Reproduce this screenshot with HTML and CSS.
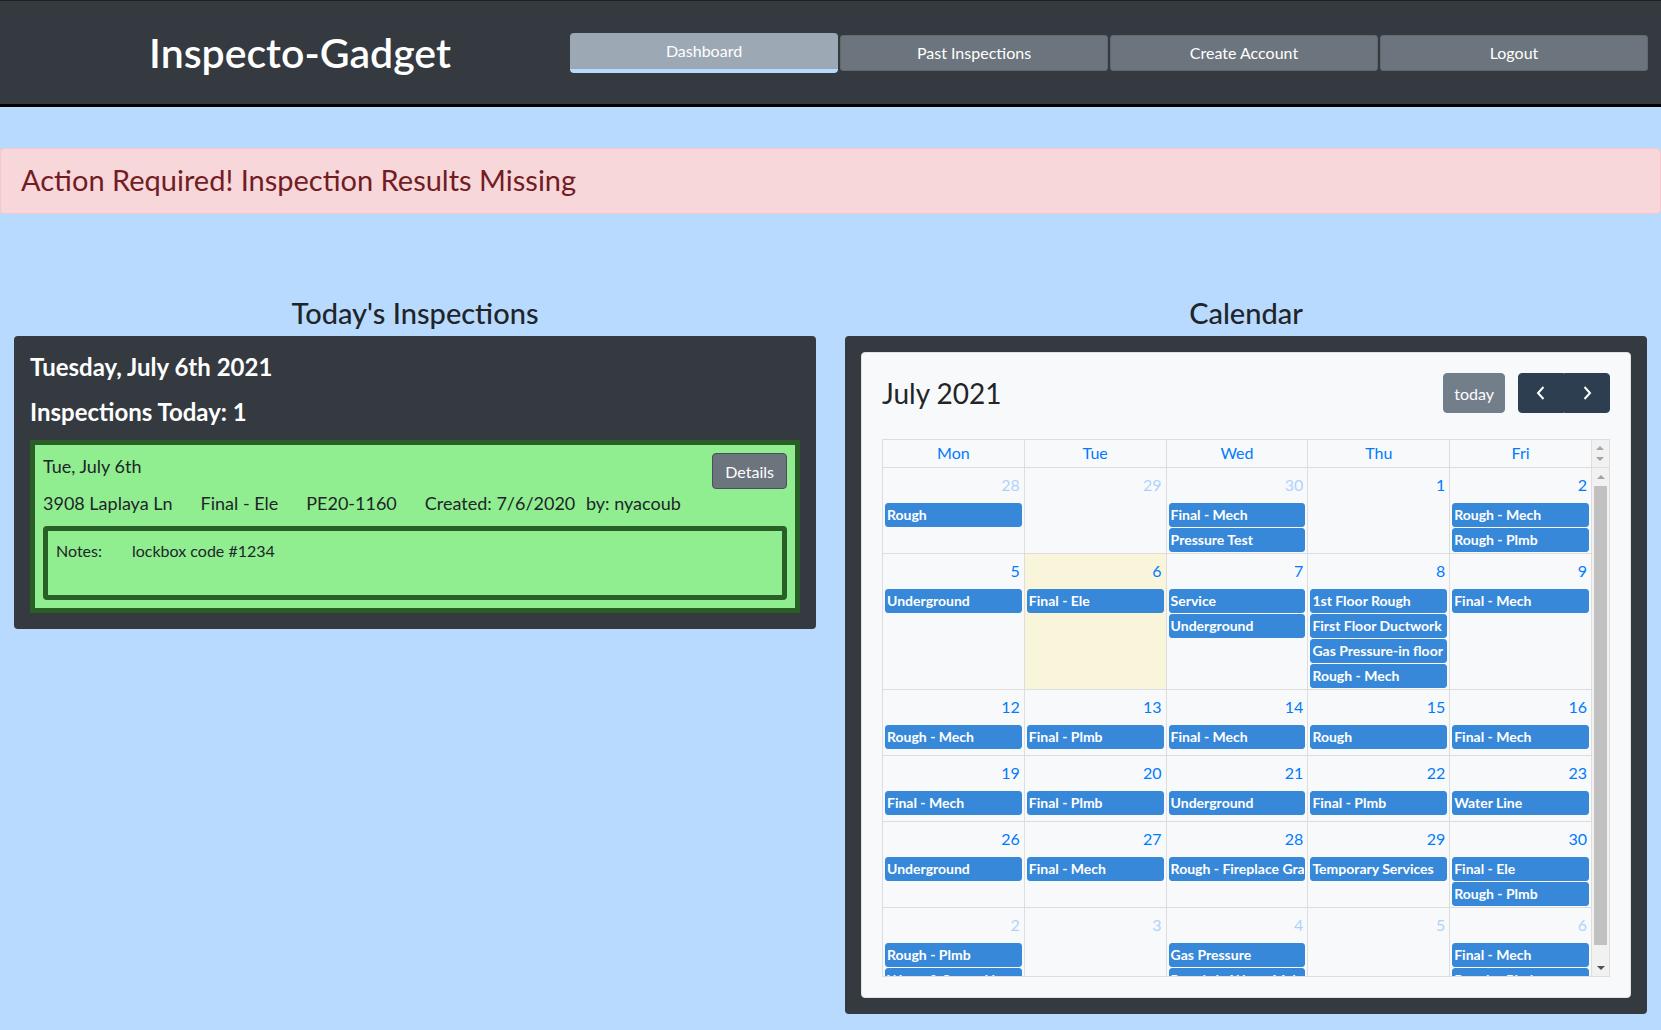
FILE: index.html
```html
<!DOCTYPE html>
<html lang="en">
<head>
    <meta charset="UTF-8">
    <meta name="viewport" content="width=device-width, initial-scale=1.0">
    <title>Inspecto-Gadget | Dashboard</title>
    <link rel="stylesheet" href="styles.css">
</head>
<body>
    <nav class="topbar">
        <div class="brand">Inspecto-Gadget</div>
        <div class="nav-links">
            <a href="#" class="nav-btn active">Dashboard</a>
            <a href="#" class="nav-btn">Past Inspections</a>
            <a href="#" class="nav-btn">Create Account</a>
            <a href="#" class="nav-btn">Logout</a>
        </div>
    </nav>

    <div class="alert">Action Required! Inspection Results Missing</div>

    <main class="columns">
        <section class="col">
            <h2 class="col-title">Today's Inspections</h2>
            <div class="card">
                <h4 class="card-heading">Tuesday, July 6th 2021</h4>
                <h4 class="card-heading count">Inspections Today: 1</h4>
                <div class="inspection">
                    <div class="insp-top">
                        <span>Tue, July 6th</span>
                        <button class="details-btn">Details</button>
                    </div>
                    <div class="insp-info">
                        <span>3908 Laplaya Ln</span>
                        <span>Final - Ele</span>
                        <span>PE20-1160</span>
                        <span>Created: 7/6/2020 <span class="by">by: nyacoub</span></span>
                    </div>
                    <div class="notes">
                        <span class="notes-label">Notes:</span>
                        <span>lockbox code #1234</span>
                    </div>
                </div>
            </div>
        </section>

        <section class="col">
            <h2 class="col-title">Calendar</h2>
            <div class="card cal-card">
                <div class="calendar">
                    <div class="cal-toolbar">
                        <h2 class="cal-title">July 2021</h2>
                        <div class="cal-buttons">
                            <button class="cal-btn today" disabled>today</button>
                            <div class="btn-group">
                                <button class="cal-btn arrow">
                                    <svg width="10" height="16" viewBox="0 0 10 16"><path d="M7.5 2 L2 8 L7.5 14" fill="none" stroke="#fff" stroke-width="2"/></svg>
                                </button>
                                <button class="cal-btn arrow">
                                    <svg width="10" height="16" viewBox="0 0 10 16"><path d="M2.5 2 L8 8 L2.5 14" fill="none" stroke="#fff" stroke-width="2"/></svg>
                                </button>
                            </div>
                        </div>
                    </div>

                    <div class="grid">
                        <div class="grid-head">
                            <div class="head-cell">Mon</div>
                            <div class="head-cell">Tue</div>
                            <div class="head-cell">Wed</div>
                            <div class="head-cell">Thu</div>
                            <div class="head-cell">Fri</div>
                            <div class="head-gutter">
                                <span class="sb-arrow up"></span>
                                <span class="sb-arrow down"></span>
                            </div>
                        </div>
                        <div class="grid-body">
                            <div class="weeks">
                                <div class="week">
                                    <div class="day other"><div class="day-num">28</div><div class="event">Rough</div></div>
                                    <div class="day other"><div class="day-num">29</div></div>
                                    <div class="day other"><div class="day-num">30</div><div class="event">Final - Mech</div><div class="event">Pressure Test</div></div>
                                    <div class="day"><div class="day-num">1</div></div>
                                    <div class="day"><div class="day-num">2</div><div class="event">Rough - Mech</div><div class="event">Rough - Plmb</div></div>
                                </div>
                                <div class="week">
                                    <div class="day"><div class="day-num">5</div><div class="event">Underground</div></div>
                                    <div class="day today"><div class="day-num">6</div><div class="event">Final - Ele</div></div>
                                    <div class="day"><div class="day-num">7</div><div class="event">Service</div><div class="event">Underground</div></div>
                                    <div class="day"><div class="day-num">8</div><div class="event">1st Floor Rough</div><div class="event">First Floor Ductwork</div><div class="event">Gas Pressure-in floor radiant</div><div class="event">Rough - Mech</div></div>
                                    <div class="day"><div class="day-num">9</div><div class="event">Final - Mech</div></div>
                                </div>
                                <div class="week">
                                    <div class="day"><div class="day-num">12</div><div class="event">Rough - Mech</div></div>
                                    <div class="day"><div class="day-num">13</div><div class="event">Final - Plmb</div></div>
                                    <div class="day"><div class="day-num">14</div><div class="event">Final - Mech</div></div>
                                    <div class="day"><div class="day-num">15</div><div class="event">Rough</div></div>
                                    <div class="day"><div class="day-num">16</div><div class="event">Final - Mech</div></div>
                                </div>
                                <div class="week">
                                    <div class="day"><div class="day-num">19</div><div class="event">Final - Mech</div></div>
                                    <div class="day"><div class="day-num">20</div><div class="event">Final - Plmb</div></div>
                                    <div class="day"><div class="day-num">21</div><div class="event">Underground</div></div>
                                    <div class="day"><div class="day-num">22</div><div class="event">Final - Plmb</div></div>
                                    <div class="day"><div class="day-num">23</div><div class="event">Water Line</div></div>
                                </div>
                                <div class="week">
                                    <div class="day"><div class="day-num">26</div><div class="event">Underground</div></div>
                                    <div class="day"><div class="day-num">27</div><div class="event">Final - Mech</div></div>
                                    <div class="day"><div class="day-num">28</div><div class="event">Rough - Fireplace Grate</div></div>
                                    <div class="day"><div class="day-num">29</div><div class="event">Temporary Services</div></div>
                                    <div class="day"><div class="day-num">30</div><div class="event">Final - Ele</div><div class="event">Rough - Plmb</div></div>
                                </div>
                                <div class="week">
                                    <div class="day other"><div class="day-num">2</div><div class="event">Rough - Plmb</div><div class="event">Water &amp; Sewer Line</div></div>
                                    <div class="day other"><div class="day-num">3</div></div>
                                    <div class="day other"><div class="day-num">4</div><div class="event">Gas Pressure</div><div class="event">Rough-in Water Main</div></div>
                                    <div class="day other"><div class="day-num">5</div></div>
                                    <div class="day other"><div class="day-num">6</div><div class="event">Final - Mech</div><div class="event">Rough - Plmb</div></div>
                                </div>
                            </div>
                            <div class="scrollbar">
                                <span class="sb-arrow up"></span>
                                <div class="sb-track"><div class="sb-thumb"></div></div>
                                <span class="sb-arrow down"></span>
                            </div>
                        </div>
                    </div>
                </div>
            </div>
        </section>
    </main>
</body>
</html>
```

FILE: styles.css
```css
body {
    margin: 0;
    font-family: Lato, "Open Sans", sans-serif;
    background: #b8daff;
    color: #212529;
    height: 1030px;
    overflow: hidden;
}

/* top navigation */
.topbar {
    display: flex;
    align-items: center;
    height: 103px;
    background: #343a40;
    border-top: 1px solid #1d2124;
    border-bottom: 3px solid #000;
}

.brand {
    width: 570px;
    padding-left: 30px;
    box-sizing: border-box;
    text-align: center;
    color: #fff;
    font-size: 41px;
    font-weight: 600;
}

.nav-links {
    display: flex;
    align-items: center;
    gap: 2px;
}

.nav-btn {
    display: flex;
    align-items: center;
    justify-content: center;
    width: 268px;
    height: 36px;
    box-sizing: border-box;
    background: #6c757d;
    border: 1px solid #61686e;
    border-radius: 3px;
    color: #fff;
    font-size: 16px;
    text-decoration: none;
}

.nav-btn.active {
    height: 40px;
    background: #9ca8b4;
    border: none;
    border-bottom: 4px solid #b8daff;
    border-radius: 4px;
}

/* alert */
.alert {
    margin-top: 41px;
    padding: 14px 20px 16px;
    background: #f8d7da;
    border: 1px solid #f5c6cb;
    border-radius: 4px;
    color: #721c24;
    font-size: 29px;
    line-height: 34px;
}

/* columns */
.columns {
    display: flex;
    gap: 29px;
    padding: 0 14px;
    margin-top: 82px;
    align-items: flex-start;
}

.col {
    flex: 1;
    min-width: 0;
}

.col-title {
    margin: 0 0 6px;
    text-align: center;
    font-size: 29px;
    font-weight: 500;
    line-height: 34px;
}

.card {
    background: #343a40;
    border-radius: 4px;
    padding: 16px;
    color: #fff;
}

.card-heading {
    margin: 0 0 16px;
    font-size: 24px;
    font-weight: 700;
    line-height: 29px;
}

.card-heading.count {
    margin-bottom: 14px;
}

.inspection {
    background: #90ee90;
    border: 5px solid #2a5e27;
    padding: 8px;
    color: #212529;
    font-size: 18px;
}

.insp-top {
    display: flex;
    justify-content: space-between;
    align-items: flex-start;
    line-height: 27px;
}

.details-btn {
    height: 36px;
    padding: 0 12px;
    background: #6c757d;
    border: 1px solid #495057;
    border-radius: 4px;
    color: #fff;
    font-family: inherit;
    font-size: 16px;
}

.insp-info {
    display: flex;
    gap: 28px;
    margin-top: 1px;
    line-height: 27px;
}

.insp-info .by {
    margin-left: 6px;
}

.notes {
    display: flex;
    gap: 30px;
    margin-top: 9px;
    height: 48px;
    padding: 8px;
    border: 5px solid #2a5e27;
    border-radius: 4px;
    font-size: 16px;
    line-height: 24px;
}

/* calendar */
.calendar {
    background: #f8f9fa;
    border: 1px solid #dee2e6;
    border-radius: 4px;
    padding: 20px;
    color: #212529;
}

.cal-toolbar {
    display: flex;
    justify-content: space-between;
    align-items: center;
    margin-bottom: 26px;
}

.cal-title {
    margin: 0;
    font-size: 28px;
    font-weight: 400;
    line-height: 40px;
}

.cal-buttons {
    display: flex;
    gap: 13px;
}

.cal-btn {
    height: 40px;
    border: 1px solid #2c3e50;
    background: #2c3e50;
    color: #fff;
    font-family: inherit;
    font-size: 16px;
    border-radius: 4px;
    padding: 0 10px;
}

.cal-btn.today {
    opacity: 0.65;
}

.btn-group {
    display: flex;
}

.btn-group .cal-btn {
    width: 46px;
    display: flex;
    align-items: center;
    justify-content: center;
}

.btn-group .cal-btn:first-child {
    border-radius: 4px 0 0 4px;
}

.btn-group .cal-btn:last-child {
    border-radius: 0 4px 4px 0;
}

.grid {
    border: 1px solid #ddd;
}

.grid-head {
    display: flex;
    height: 27px;
    border-bottom: 1px solid #ddd;
}

.head-cell {
    flex: 1;
    border-right: 1px solid #ddd;
    text-align: center;
    color: #007bff;
    font-size: 16px;
    line-height: 26px;
}

.head-gutter,
.scrollbar {
    width: 17px;
    flex: none;
    background: #f1f1f1;
    display: flex;
    flex-direction: column;
    align-items: center;
}

.head-gutter {
    justify-content: space-around;
    padding: 3px 0;
    box-sizing: border-box;
}

.sb-arrow {
    width: 0;
    height: 0;
    border-left: 4px solid transparent;
    border-right: 4px solid transparent;
}

.sb-arrow.up {
    border-bottom: 4px solid #a3a3a3;
}

.sb-arrow.down {
    border-top: 4px solid #505050;
}

.head-gutter .sb-arrow.down {
    border-top-color: #a3a3a3;
}

.grid-body {
    display: flex;
    height: 508px;
}

.scrollbar .sb-arrow {
    margin: 7px 0 6px;
}

.sb-track {
    flex: 1;
    width: 100%;
    display: flex;
    justify-content: center;
}

.sb-thumb {
    width: 13px;
    margin: 1px 0 14px;
    background: #c1c1c1;
}

.weeks {
    flex: 1;
    overflow: hidden;
}

.week {
    display: flex;
    border-bottom: 1px solid #ddd;
}

.day {
    flex: 1;
    min-width: 0;
    min-height: 65px;
    border-right: 1px solid #ddd;
}

.day.today {
    background: rgba(255, 220, 40, 0.15);
}

.day-num {
    padding: 5px 4px 0;
    text-align: right;
    color: #007bff;
    font-size: 16px;
    line-height: 24px;
    margin-bottom: 6px;
}

.day.other .day-num {
    opacity: 0.3;
}

.event {
    margin: 0 2px 1px;
    height: 24px;
    box-sizing: border-box;
    padding: 0 1px;
    background: #3788d8;
    border: 1px solid #3788d8;
    border-radius: 3px;
    color: #fff;
    font-size: 14px;
    font-weight: 700;
    line-height: 22px;
    white-space: nowrap;
    overflow: hidden;
}
```
